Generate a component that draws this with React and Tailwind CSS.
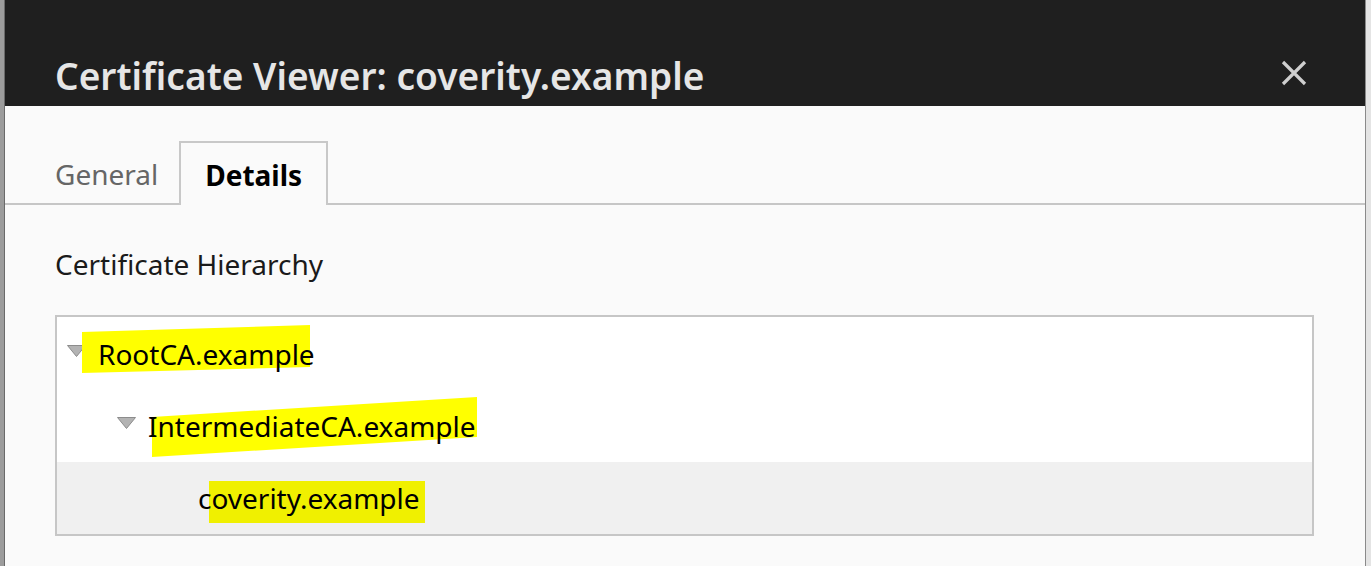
import React from 'react';

const font = { fontFamily: '"Noto Sans", "Open Sans", sans-serif' };

const rows = [
  { label: 'RootCA.example', indent: 'pl-[10px]', open: true },
  { label: 'IntermediateCA.example', indent: 'pl-[60px]', open: true },
  { label: 'coverity.example', indent: 'pl-[141px]', open: false, selected: true },
];

const Caret = () => (
  <svg width="19" height="12" viewBox="0 0 19 12" className="mr-[12px] -mt-[6px] shrink-0">
    <polygon points="0.5,0.5 18.5,0.5 9.5,11.5" fill="#b3b3b3" stroke="#8c8c8c" strokeWidth="1" />
  </svg>
);

const App = () => {
  return (
    <div className="w-[1371px] h-[566px] overflow-hidden flex bg-[#fafafa]" style={font}>
      {/* window frame left */}
      <div className="w-[5px] h-full bg-[#9c9c9c] border-r border-[#6a6a6a]"></div>

      <div className="flex-1 flex flex-col">
        {/* header */}
        <div className="h-[106px] bg-[#1f1f1f] flex items-end justify-between pl-[50px] pr-[58px] pb-[6px]">
          <h1 className="text-[37px] leading-[48px] text-[#e6e6e6] font-semibold tracking-[0.05px]">
            Certificate Viewer: coverity.example
          </h1>
          <svg width="26" height="26" viewBox="0 0 26 26" className="mb-[14px]">
            <path d="M2 2 L24 24 M24 2 L2 24" stroke="#cfcfcf" strokeWidth="3.2" />
          </svg>
        </div>

        {/* tabs */}
        <div className="pt-[35px] flex items-end border-b-2 border-[#c6c6c6] pl-[50px]">
          <div className="h-[62px] flex items-center pt-[4px] pr-[21px] text-[28px] text-[#666666]">General</div>
          <div className="h-[64px] -mb-[2px] px-[24px] pt-[2px] flex items-center border-2 border-b-0 border-[#c8c8c8] bg-[#fafafa] text-[28px] font-bold text-black">
            Details
          </div>
        </div>

        {/* body */}
        <div className="pl-[50px] pr-[51px]">
          <div className="pt-[38px] h-[110px] text-[28px] text-[#1a1a1a]">Certificate Hierarchy</div>
          <div className="relative border-2 border-[#c6c6c6] bg-white pt-px">
            <svg className="absolute left-0 top-0 pointer-events-none" width="700" height="217">
              <polygon points="25,15 253,8 253,50 25,56" fill="#ffff00" />
              <polygon points="95,100 420,80 420,120 95,140" fill="#ffff00" />
              <polygon points="152,164 368,164 368,206 152,206" fill="#f0f000" />
            </svg>
            {rows.map((r) => (
              <div
                key={r.label}
                className={`h-[72px] flex items-center ${r.indent} ${r.selected ? 'bg-[#f0f0f0]' : ''}`}
              >
                {r.open && <Caret />}
                <span className="relative text-[28px] text-black">{r.label}</span>
              </div>
            ))}
          </div>
        </div>
      </div>

      {/* window frame right */}
      <div className="w-[6px] h-full border-l border-[#8a8a8a] bg-[#e4e4e4]"></div>
    </div>
  );
};

export default App;
